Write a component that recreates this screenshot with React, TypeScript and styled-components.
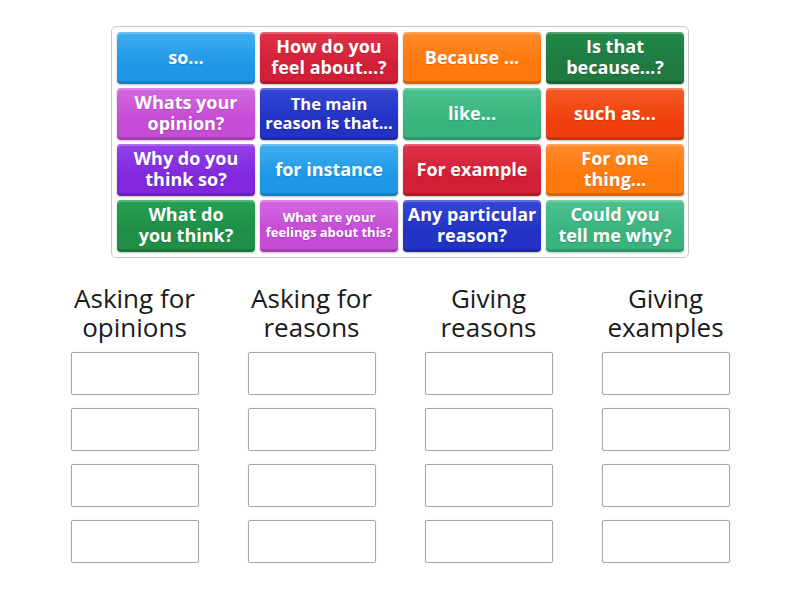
import React from 'react';
import styled, { createGlobalStyle } from 'styled-components';

const GlobalStyle = createGlobalStyle`
    html, body {
        margin: 0;
        padding: 0;
        background: #ffffff;
        font-family: "Open Sans", "Noto Sans", sans-serif;
    }
`;

const Page = styled.div`
    width: 800px;
    height: 600px;
    display: flex;
    flex-direction: column;
    align-items: center;
    padding-top: 26px;
    box-sizing: border-box;
`;

const TilePanel = styled.div`
    display: grid;
    grid-template-columns: repeat(4, 138px);
    grid-auto-rows: 52px;
    column-gap: 5px;
    row-gap: 4px;
    padding: 5px 4px 5px 5px;
    border: 1px solid #c8c8c8;
    border-radius: 5px;
    background: #ffffff;
`;

interface TileProps {
    base: string;
    top: string;
    size: number;
}

const Tile = styled.div<TileProps>`
    display: flex;
    align-items: center;
    justify-content: center;
    text-align: center;
    white-space: pre-line;
    box-sizing: border-box;
    padding: 0 2px 2px;
    border-radius: 4px;
    background: linear-gradient(${props => props.top}, ${props => props.base} 60%);
    box-shadow: inset 0 2px 0 rgba(255, 255, 255, 0.22), inset 0 -3px 0 rgba(0, 0, 0, 0.16),
        0 1px 2px rgba(0, 0, 0, 0.25);
    color: #ffffff;
    font-weight: 700;
    font-size: ${props => props.size}px;
    line-height: ${props => Math.round(props.size * 1.18)}px;
    text-shadow: 0 1px 1px rgba(0, 0, 0, 0.15);
`;

const Groups = styled.div`
    display: grid;
    grid-template-columns: repeat(4, 128px);
    column-gap: 49px;
    margin-top: 26px;
`;

const Group = styled.div`
    display: flex;
    flex-direction: column;
    align-items: center;
`;

const GroupTitle = styled.div`
    height: 58px;
    margin: 0 -10px 10px;
    font-size: 26px;
    line-height: 29px;
    color: #1a1a1a;
    text-align: center;
`;

const Slots = styled.div`
    display: flex;
    flex-direction: column;
    gap: 13px;
    align-self: stretch;
`;

const Slot = styled.div`
    height: 43px;
    box-sizing: border-box;
    border: 1px solid #a6a6a6;
    border-radius: 2px;
    background: #ffffff;
    box-shadow: 0 0 2px rgba(0, 0, 0, 0.08);
`;

const COLORS = {
    blue: { base: '#1e98e6', top: '#42aef0' },
    red: { base: '#d11f36', top: '#e0334a' },
    orange: { base: '#ff790c', top: '#ff8a2a' },
    forest: { base: '#1e7a41', top: '#228a4a' },
    pink: { base: '#c64bd6', top: '#d369e0' },
    navy: { base: '#2233c4', top: '#3447d4' },
    teal: { base: '#39b47f', top: '#4dc18f' },
    flame: { base: '#f0400e', top: '#f55a26' },
    purple: { base: '#8128de', top: '#9342e6' },
    green: { base: '#1f8e47', top: '#26a052' },
};

type ColorName = keyof typeof COLORS;

const TILES: { text: string; color: ColorName; size?: number }[] = [
    { text: 'so...', color: 'blue' },
    { text: 'How do you\nfeel about...?', color: 'red' },
    { text: 'Because ...', color: 'orange' },
    { text: 'Is that\nbecause...?', color: 'forest' },
    { text: 'Whats your\nopinion?', color: 'pink' },
    { text: 'The main\nreason is that...', color: 'navy', size: 16.5 },
    { text: 'like...', color: 'teal' },
    { text: 'such as...', color: 'flame' },
    { text: 'Why do you\nthink so?', color: 'purple' },
    { text: 'for instance', color: 'blue' },
    { text: 'For example', color: 'red' },
    { text: 'For one\nthing...', color: 'orange' },
    { text: 'What do\nyou think?', color: 'green' },
    { text: 'What are your\nfeelings about this?', color: 'pink', size: 13 },
    { text: 'Any particular\nreason?', color: 'navy' },
    { text: 'Could you\ntell me why?', color: 'teal' },
];

const GROUPS = ['Asking for opinions', 'Asking for reasons', 'Giving reasons', 'Giving examples'];

const App = () => (
    <Page>
        <GlobalStyle />
        <TilePanel>
            {TILES.map(tile => (
                <Tile
                    key={tile.text}
                    base={COLORS[tile.color].base}
                    top={COLORS[tile.color].top}
                    size={tile.size ?? 18}
                >
                    {tile.text}
                </Tile>
            ))}
        </TilePanel>
        <Groups>
            {GROUPS.map(title => (
                <Group key={title}>
                    <GroupTitle>{title}</GroupTitle>
                    <Slots>
                        {[0, 1, 2, 3].map(i => (
                            <Slot key={i} />
                        ))}
                    </Slots>
                </Group>
            ))}
        </Groups>
    </Page>
);

export default App;
